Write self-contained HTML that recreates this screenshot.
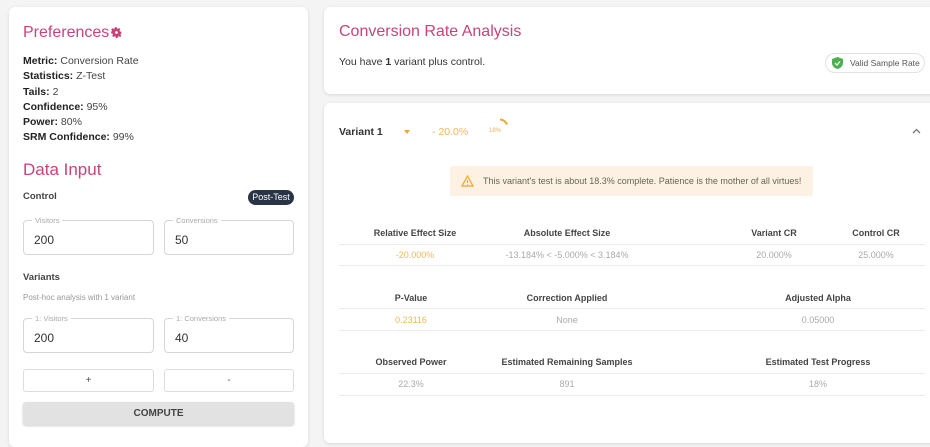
<!DOCTYPE html>
<html><head><meta charset="utf-8"><style>
*{box-sizing:border-box;margin:0;padding:0}
body{width:930px;height:429px;background:#f4f4f4;font-family:"Liberation Sans",sans-serif;color:#333;position:relative;overflow:hidden;font-size:10px}
.a{position:absolute;white-space:nowrap}
.card{position:absolute;background:#fff;border-radius:6px;box-shadow:0 1px 3px rgba(0,0,0,.12)}
.pink{color:#c8437c}
.l{font-size:10.5px;color:#444}
.l b{color:#222}
.inp{position:absolute;border:1px solid #d6d6d6;border-radius:4px;height:35px}
.inp span{position:absolute;top:-5px;left:8px;background:#fff;padding:0 3px;font-size:7.5px;color:#aaa}
.inp div{position:absolute;left:10px;top:12px;font-size:12px;color:#333}
.btn{position:absolute;border:1px solid #ddd;border-radius:3px;height:23px;text-align:center;line-height:21px;font-size:10px;color:#555;background:#fff}
.th{position:absolute;font-size:9px;font-weight:bold;color:#444;transform:translateX(-50%);white-space:nowrap}
.td{position:absolute;font-size:9px;color:#aaa;transform:translateX(-50%);white-space:nowrap}
.hr{position:absolute;left:339px;width:586px;height:1px;background:#ececec}
</style></head><body>
<div class="card" style="left:9px;top:7px;width:299px;height:440px"></div>
<div class="a pink" style="left:23px;top:24px;font-size:16px">Preferences</div>
<svg class="a" style="left:110px;top:26px" width="13" height="13" viewBox="0 0 24 24"><path fill="#c8437c" d="M12 8a4 4 0 100 8 4 4 0 000-8zm9 5.5v-3l-2.6-.6-.8-1.9 1.4-2.3-2.1-2.1-2.3 1.4-1.9-.8L12.1 2h-3l-.6 2.6-1.9.8-2.3-1.4-2.1 2.1 1.4 2.3-.8 1.9L2 10.5v3l2.6.6.8 1.9-1.4 2.3 2.1 2.1 2.3-1.4 1.9.8.6 2.6h3l.6-2.6 1.9-.8 2.3 1.4 2.1-2.1-1.4-2.3.8-1.9z"/><circle cx="12" cy="12" r="2.5" fill="#fff"/></svg>
<div class="a l" style="left:23px;top:54px;line-height:15.3px"><b>Metric:</b> Conversion Rate<br><b>Statistics:</b> Z-Test<br><b>Tails:</b> 2<br><b>Confidence:</b> 95%<br><b>Power:</b> 80%<br><b>SRM Confidence:</b> 99%</div>
<div class="a pink" style="left:23px;top:160px;font-size:17px">Data Input</div>
<div class="a" style="left:23px;top:191px;font-size:9.5px;font-weight:bold;color:#444">Control</div>
<div class="a" style="left:248px;top:190px;width:46px;height:15px;border-radius:8px;background:#2a3447;color:#fff;font-size:9px;text-align:center;line-height:15px">Post-Test</div>
<div class="inp" style="left:23px;top:220px;width:131px"><span>Visitors</span><div>200</div></div>
<div class="inp" style="left:164px;top:220px;width:130px"><span>Conversions</span><div>50</div></div>
<div class="a" style="left:23px;top:272px;font-size:9.5px;font-weight:bold;color:#444">Variants</div>
<div class="a" style="left:23px;top:293px;font-size:8px;color:#999">Post-hoc analysis with 1 variant</div>
<div class="inp" style="left:23px;top:318px;width:131px"><span>1: Visitors</span><div>200</div></div>
<div class="inp" style="left:164px;top:318px;width:130px"><span>1: Conversions</span><div>40</div></div>
<div class="btn" style="left:23px;top:369px;width:131px">+</div>
<div class="btn" style="left:164px;top:369px;width:130px">-</div>
<div class="btn" style="left:23px;top:402px;width:271px;height:23px;background:#e2e2e2;border-color:#e2e2e2;font-weight:bold;color:#444;box-shadow:0 1px 2px rgba(0,0,0,.2)">COMPUTE</div>

<div class="card" style="left:324px;top:7px;width:620px;height:87px"></div>
<div class="a pink" style="left:339px;top:23px;font-size:16px">Conversion Rate Analysis</div>
<div class="a" style="left:339px;top:56px;font-size:10.5px;color:#333">You have <b>1</b> variant plus control.</div>
<div class="a" style="left:825px;top:53px;width:100px;height:20px;border:1px solid #e2e2e2;border-radius:10px;font-size:8.5px;color:#555;line-height:18px;padding-left:24px">Valid Sample Rate</div>
<svg class="a" style="left:832px;top:57px" width="11" height="12" viewBox="0 0 11 12"><path d="M5.5 0L11 2v4c0 3-2.5 5.3-5.5 6C2.5 11.3 0 9 0 6V2z" fill="#4caf50"/><path d="M3 6l2 2 3-3.5" stroke="#fff" stroke-width="1.3" fill="none"/></svg>

<div class="card" style="left:324px;top:103px;width:620px;height:340px"></div>
<div class="a" style="left:339px;top:126px;font-size:10.5px;font-weight:bold;color:#333">Variant 1</div>
<div class="a" style="left:404px;top:130px;width:0;height:0;border-left:3.5px solid transparent;border-right:3.5px solid transparent;border-top:4px solid #f0a52c"></div>
<div class="a" style="left:432px;top:126px;font-size:10.5px;color:#f0b760">- 20.0%</div>
<svg class="a" style="left:490px;top:117px" width="20" height="20" viewBox="0 0 20 20"><path d="M10 2.5A7.5 7.5 0 0 1 17 7.5" stroke="#e8a93a" stroke-width="2" fill="none"/></svg>
<div class="a" style="left:489px;top:128px;font-size:6px;color:#e8b060">18%</div>
<svg class="a" style="left:912px;top:128px" width="9" height="6" viewBox="0 0 9 6"><path d="M1 5L4.5 1.5 8 5" stroke="#777" stroke-width="1.3" fill="none"/></svg>
<div class="a" style="left:450px;top:166px;width:363px;height:30px;background:#fdf1e3;border-radius:2px"></div>
<svg class="a" style="left:461px;top:175px" width="13" height="12" viewBox="0 0 13 12"><path d="M6.5 1L12 11H1z" fill="none" stroke="#f0a52c" stroke-width="1.2"/><path d="M6.5 5v3M6.5 9v.8" stroke="#f0a52c" stroke-width="1.1"/></svg>
<div class="a" style="left:483px;top:176px;font-size:9px;color:#665">This variant's test is about 18.3% complete. Patience is the mother of all virtues!</div>

<div class="th" style="left:415px;top:228px">Relative Effect Size</div>
<div class="th" style="left:567px;top:228px">Absolute Effect Size</div>
<div class="th" style="left:774px;top:228px">Variant CR</div>
<div class="th" style="left:876px;top:228px">Control CR</div>
<div class="hr" style="top:244px"></div>
<div class="td" style="left:415px;top:250px;color:#f0b760">-20.000%</div>
<div class="td" style="left:567px;top:250px">-13.184% &lt; -5.000% &lt; 3.184%</div>
<div class="td" style="left:774px;top:250px">20.000%</div>
<div class="td" style="left:876px;top:250px">25.000%</div>
<div class="hr" style="top:265px"></div>

<div class="th" style="left:411px;top:293px">P-Value</div>
<div class="th" style="left:567px;top:293px">Correction Applied</div>
<div class="th" style="left:818px;top:293px">Adjusted Alpha</div>
<div class="hr" style="top:308px"></div>
<div class="td" style="left:411px;top:315px;color:#f0b760">0.23116</div>
<div class="td" style="left:567px;top:315px">None</div>
<div class="td" style="left:818px;top:315px">0.05000</div>
<div class="hr" style="top:330px"></div>

<div class="th" style="left:411px;top:357px">Observed Power</div>
<div class="th" style="left:567px;top:357px">Estimated Remaining Samples</div>
<div class="th" style="left:818px;top:357px">Estimated Test Progress</div>
<div class="hr" style="top:373px"></div>
<div class="td" style="left:411px;top:379px">22.3%</div>
<div class="td" style="left:567px;top:379px">891</div>
<div class="td" style="left:818px;top:379px">18%</div>
<div class="hr" style="top:395px"></div>
</body></html>
